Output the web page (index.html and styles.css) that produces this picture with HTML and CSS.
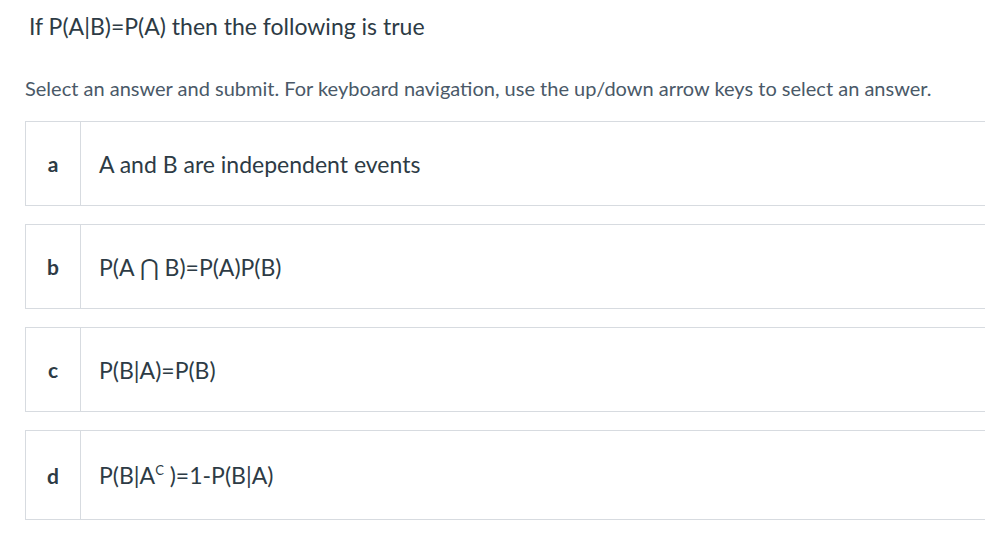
FILE: index.html
```html
<!DOCTYPE html>
<html lang="en">
<head>
<meta charset="utf-8">
<title>Question</title>
<link rel="stylesheet" href="styles.css">
</head>
<body>
<main class="question">
  <h1 class="prompt">If P(A|B)=P(A) then the following is true</h1>
  <p class="instructions">Select an answer and submit. For keyboard navigation, use the up/down arrow keys to select an answer.</p>
  <ul class="answers">
    <li class="answer"><span class="letter">a</span><span class="text">A and B are independent events</span></li>
    <li class="answer"><span class="letter">b</span><span class="text">P(A ⋂ B)=P(A)P(B)</span></li>
    <li class="answer"><span class="letter">c</span><span class="text">P(B|A)=P(B)</span></li>
    <li class="answer answer-tall"><span class="letter">d</span><span class="text">P(B|A<sup class="sup">C</sup> )=1-P(B|A)</span></li>
  </ul>
</main>
</body>
</html>
```
FILE: styles.css
```css
html, body {
  margin: 0;
  padding: 0;
  background: #ffffff;
}
body {
  font-family: Lato, "Noto Sans", sans-serif;
  color: #2d3b45;
}
.question {
  padding: 10px 0 0 25px;
}
.prompt {
  margin: 0 0 0 4px;
  font-size: 23px;
  font-weight: 400;
  line-height: 32px;
  color: #2d3b45;
}
.instructions {
  margin: 32px 0 0 0;
  font-size: 20px;
  line-height: 28px;
  color: #4a5968;
}
.answers {
  list-style: none;
  margin: 19px 0 0 0;
  padding: 0;
  display: flex;
  flex-direction: column;
  gap: 18px;
}
.answer {
  display: flex;
  align-items: center;
  height: 85px;
  box-sizing: border-box;
  border: 1px solid #d7dbe0;
  border-right: none;
}
.answer-tall {
  height: 90px;
}
.letter {
  width: 54px;
  align-self: stretch;
  display: flex;
  align-items: center;
  justify-content: center;
  border-right: 1px solid #d7dbe0;
  font-size: 21px;
  font-weight: 700;
  color: #2d3b45;
}
.text {
  padding-left: 18px;
  font-size: 23px;
  color: #2d3b45;
}
.sup {
  font-size: 13px;
  vertical-align: 9px;
  line-height: 0;
}
```
